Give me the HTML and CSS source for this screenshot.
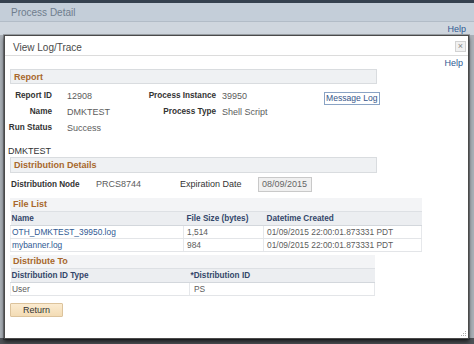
FILE: index.html
```html
<!DOCTYPE html>
<html lang="en">
<head>
    <meta charset="UTF-8">
    <title>Process Detail</title>
    <link rel="stylesheet" href="styles.css">
</head>
<body>
    <div class="topband"></div>
    <div class="page-head">Process Detail</div>
    <div class="page-help"><a href="#">Help</a></div>
    <div class="page-rest"></div>

    <div class="dialog">
        <div class="dlg-title">
            View Log/Trace
            <span class="close">&times;</span>
        </div>
        <div class="dlg-body">
            <div class="help-row"><a href="#">Help</a></div>

            <div class="sec-head boxed w367">Report</div>
            <div class="report-grid">
                <div class="lbl">Report ID</div>
                <div class="val">12908</div>
                <div class="lbl">Process Instance</div>
                <div class="val">39950</div>
                <div class="msg"><a href="#">Message Log</a></div>

                <div class="lbl">Name</div>
                <div class="val">DMKTEST</div>
                <div class="lbl">Process Type</div>
                <div class="val">Shell Script</div>
                <div></div>

                <div class="lbl">Run Status</div>
                <div class="val">Success</div>
                <div></div>
                <div></div>
                <div></div>
            </div>

            <div class="plain">DMKTEST</div>

            <div class="sec-head boxed w367 tall">Distribution Details</div>
            <div class="dist-row">
                <div class="dlbl">Distribution Node</div>
                <div class="dval">PRCS8744</div>
                <div class="dlbl2">Expiration Date</div>
                <div class="date-box">08/09/2015</div>
            </div>

            <div class="sec-head w412">File List</div>
            <table class="grid files">
                <tr>
                    <th class="c1">Name</th>
                    <th class="c2">File Size (bytes)</th>
                    <th class="c3">Datetime Created</th>
                </tr>
                <tr>
                    <td><a href="#">OTH_DMKTEST_39950.log</a></td>
                    <td>1,514</td>
                    <td>01/09/2015 22:00:01.873331 PDT</td>
                </tr>
                <tr>
                    <td><a href="#">mybanner.log</a></td>
                    <td>984</td>
                    <td>01/09/2015 22:00:01.873331 PDT</td>
                </tr>
            </table>

            <div class="sec-head w365">Distribute To</div>
            <table class="grid dest">
                <tr>
                    <th class="d1">Distribution ID Type</th>
                    <th class="d2">*Distribution ID</th>
                </tr>
                <tr>
                    <td>User</td>
                    <td class="ps">PS</td>
                </tr>
            </table>

            <button class="ret">Return</button>
        </div>
        <svg class="grip" width="7" height="7" viewBox="0 0 7 7">
            <rect x="5" y="1" width="1" height="1" fill="#aaa"/>
            <rect x="3" y="3" width="1" height="1" fill="#aaa"/>
            <rect x="5" y="3" width="1" height="1" fill="#aaa"/>
            <rect x="1" y="5" width="1" height="1" fill="#aaa"/>
            <rect x="3" y="5" width="1" height="1" fill="#aaa"/>
            <rect x="5" y="5" width="1" height="1" fill="#aaa"/>
        </svg>
    </div>
</body>
</html>
```

FILE: styles.css
```css
body {
    margin: 0;
    font-family: "Liberation Sans", Arial, sans-serif;
    font-size: 9px;
    background: #4e5257;
    overflow: hidden;
}
a {
    color: #2f5a93;
    text-decoration: none;
}
.topband {
    height: 3px;
    background: #35414f;
}
.page-head {
    height: 18px;
    line-height: 19px;
    padding-left: 11px;
    font-size: 10px;
    color: #6f7d8d;
    background: #c4ced9;
    border-bottom: 1px solid #b2bcc7;
}
.page-help {
    height: 13px;
    line-height: 14px;
    text-align: right;
    padding-right: 8px;
    background: #cfd6de;
}
.page-rest {
    height: 303px;
    background: #aab0b7;
}
.dialog {
    position: absolute;
    left: 4px;
    top: 35px;
    width: 463px;
    height: 302px;
    background: #fff;
    border: 1px solid #4a4a4a;
    box-shadow: 0 0 0 1px rgba(0,0,0,0.25), 0 3px 4px rgba(0,0,0,0.6);
}
.dlg-title {
    position: relative;
    height: 19px;
    line-height: 23px;
    padding-left: 8px;
    font-size: 10px;
    color: #4a4a4a;
    border-bottom: 1px solid #dcdcdc;
}
.close {
    position: absolute;
    right: 2px;
    top: 5px;
    width: 9px;
    height: 9px;
    line-height: 8px;
    text-align: center;
    font-size: 9px;
    color: #888;
    background: #f1f1f1;
    border: 1px solid #d2d2d2;
}
.dlg-body {
    padding: 0 5px;
}
.help-row {
    height: 13px;
    line-height: 15px;
    text-align: right;
}
.sec-head {
    box-sizing: border-box;
    height: 13px;
    line-height: 13px;
    padding-left: 3px;
    font-size: 9px;
    font-weight: bold;
    color: #a8672c;
    background: #f3f4f6;
}
.sec-head.boxed {
    height: 15px;
    line-height: 14px;
    border: 1px solid #d9dcdf;
    background: #eff1f3;
}
.sec-head.tall {
    height: 16px;
    line-height: 15px;
}
.w367 { width: 367px; }
.w412 { width: 412px; }
.w365 { width: 365px; }

.report-grid {
    display: grid;
    grid-template-columns: 45px 88px 76px 108px 60px;
    grid-auto-rows: 16px;
    margin: 4px 0 0 -3px;
    line-height: 16px;
}
.lbl {
    font-size: 8.2px;
    font-weight: bold;
    color: #333;
    text-align: right;
    white-space: nowrap;
}
.val {
    color: #5c5c5c;
    white-space: nowrap;
}
.report-grid .val:nth-child(2),
.report-grid .val:nth-child(7),
.report-grid .val:nth-child(12) {
    padding-left: 15px;
}
.report-grid .val:nth-child(4),
.report-grid .val:nth-child(9) {
    padding-left: 6px;
}
.msg {
    padding-top: 2px;
}
.msg a {
    display: inline-block;
    height: 11px;
    line-height: 11px;
    padding: 0 1px;
    font-size: 8.6px;
    border: 1px solid #8aa3c4;
    color: #36568a;
    white-space: nowrap;
}
.plain {
    margin: 9px 0 0 -2px;
    height: 12px;
    line-height: 12px;
    color: #333;
}
.dist-row {
    display: flex;
    align-items: center;
    height: 18px;
    margin-top: 2px;
}
.dlbl {
    width: 86px;
    padding-left: 1px;
    box-sizing: border-box;
    font-size: 8.2px;
    font-weight: bold;
    color: #333;
}
.dval {
    width: 84px;
    color: #5c5c5c;
}
.dlbl2 {
    width: 78px;
    color: #333;
}
.date-box {
    box-sizing: border-box;
    width: 54px;
    height: 15px;
    line-height: 13px;
    padding-left: 3px;
    color: #666;
    background: #f0f0f0;
    border: 1px solid #c9c9c9;
}
.dist-row + .sec-head {
    margin-top: 5px;
}
table.grid {
    border-collapse: collapse;
    table-layout: fixed;
}
table.grid th {
    height: 13px;
    padding: 0 0 0 1px;
    text-align: left;
    font-size: 8.2px;
    font-weight: bold;
    color: #33466a;
    background: #eceef1;
    border-top: 1px solid #dde0e4;
    border-bottom: 1px solid #d3d7dc;
    white-space: nowrap;
}
table.grid td {
    height: 12px;
    padding: 0 0 0 1px;
    font-size: 8.4px;
    color: #5c5c5c;
    border-bottom: 1px solid #e3e5e8;
    border-right: 1px solid #e6e8eb;
    white-space: nowrap;
}
.files {
    width: 412px;
}
.files .c1 { width: 172px; }
.files .c2 { width: 77px; padding-left: 3px; }
.files .c3 { padding-left: 3px; }
.files td + td { padding-left: 3px; }
.files td:first-child { border-left: 1px solid #eef0f2; }
.files + .sec-head {
    margin-top: 3px;
}
.dest {
    width: 365px;
}
.dest .d1 { width: 178px; }
.dest td {
    height: 17px;
    font-size: 9px;
}
.dest td:first-child { border-left: 1px solid #eef0f2; }
.dest .ps { padding-left: 4px; }
.ret {
    display: block;
    margin-top: 7px;
    width: 53px;
    height: 14px;
    padding: 0;
    font-family: "Liberation Sans", Arial, sans-serif;
    font-size: 9px;
    color: #333;
    background: linear-gradient(#fbebd0, #f3dcb5);
    border: 1px solid #dcc39c;
    border-radius: 1px;
}
.grip {
    position: absolute;
    right: 1px;
    bottom: 1px;
}
```
